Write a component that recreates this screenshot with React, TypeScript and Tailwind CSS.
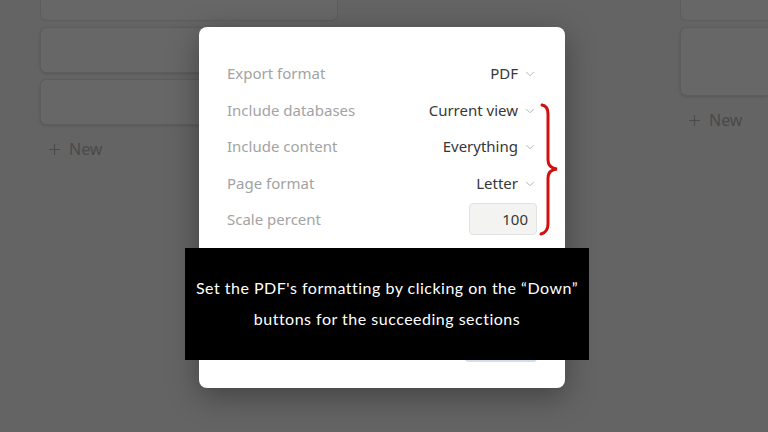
import { ChevronDown, Plus } from "lucide-react"

const rows = [
  { label: "Export format", value: "PDF" },
  { label: "Include databases", value: "Current view" },
  { label: "Include content", value: "Everything" },
  { label: "Page format", value: "Letter" },
]

const Card = ({ h }: { h: string }) => (
  <div className={`${h} rounded-md bg-[#676767] border border-[#5d5d5d] shadow-sm`} />
)

const NewBtn = () => (
  <div className="flex items-center gap-[6px] px-[6px] text-[16px] text-[#4a4a4a]">
    <Plus size={17} strokeWidth={1.5} />
    <span>New</span>
  </div>
)

const App = () => {
  return (
    <div
      className="relative w-[768px] h-[432px] overflow-hidden bg-[#646464]"
      style={{ fontFamily: "'Noto Sans', 'Open Sans', sans-serif" }}
    >
      {/* board behind the dialog */}
      <div className="flex gap-[342px] pl-[40px]">
        <div className="w-[298px] shrink-0 flex flex-col gap-[6px]">
          <div className="h-[21px] rounded-b-md bg-[#676767] border border-t-0 border-[#5d5d5d]" />
          <Card h="h-[46px]" />
          <Card h="h-[46px]" />
          <div className="mt-[6px]"><NewBtn /></div>
        </div>
        <div className="w-[88px] shrink-0 flex flex-col gap-[6px]">
          <div className="h-[21px] rounded-bl-md bg-[#676767] border border-t-0 border-r-0 border-[#5d5d5d]" />
          <div className="h-[69px] rounded-l-md bg-[#676767] border border-r-0 border-[#5d5d5d] shadow-sm" />
          <div className="mt-[6px]"><NewBtn /></div>
        </div>
      </div>

      {/* export dialog */}
      <div className="absolute left-[199px] top-[27px] w-[366px] h-[361px] bg-white rounded-lg shadow-[0_8px_30px_rgba(0,0,0,0.35)] px-7 pt-[28px] flex flex-col">
        {rows.map((r) => (
          <div key={r.label} className="h-[36.5px] flex items-center justify-between text-[15px]">
            <span className="text-[#a3a3a3]">{r.label}</span>
            <span className="flex items-center gap-[5px] text-[#373737]">
              {r.value}
              <ChevronDown size={14} strokeWidth={1.5} className="text-[#aaaaaa] mt-[2px]" />
            </span>
          </div>
        ))}
        <div className="h-[36.5px] flex items-center justify-between text-[15px]">
          <span className="text-[#a3a3a3]">Scale percent</span>
          <div className="w-[68px] h-[32px] rounded-[4px] bg-[#f3f3f2] border border-[#e2e2e2] flex items-center justify-end pr-[8px] text-[#373737]">
            100
          </div>
        </div>
        <div className="flex-1" />
        <div className="flex justify-end mb-[26px]">
          <div className="w-[72px] h-[32px] rounded-[4px] bg-[#cddff1]" />
        </div>
      </div>

      {/* red brace annotation */}
      <svg className="absolute left-[538px] top-[103px]" width="24" height="134" viewBox="0 0 24 134" fill="none">
        <path
          d="M4 2 Q10 3 10 11 L10 57 Q10 65 19 66 Q10 67 10 75 L10 121 Q10 129 3 131"
          stroke="#d40f0f"
          strokeWidth="3"
          strokeLinecap="round"
        />
      </svg>

      {/* caption */}
      <div
        className="absolute left-[185px] top-[248px] w-[404px] h-[112px] bg-black flex items-center justify-center text-center text-white text-[16px] leading-[31px] tracking-[0.5px]"
        style={{ fontFamily: "Lato, 'Noto Sans', sans-serif" }}
      >
        <p className="-mt-[2px]">
          Set the PDF's formatting by clicking on the “Down”
          <br />
          buttons for the succeeding sections
        </p>
      </div>
    </div>
  )
}

export default App
